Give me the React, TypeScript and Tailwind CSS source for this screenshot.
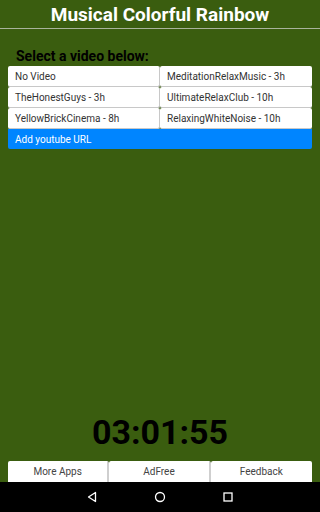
import React from "react";

const cells = [
  "No Video",
  "MeditationRelaxMusic - 3h",
  "TheHonestGuys - 3h",
  "UltimateRelaxClub - 10h",
  "YellowBrickCinema - 8h",
  "RelaxingWhiteNoise - 10h",
];

export default function App() {
  return (
    <div
      className="w-[320px] h-[512px] flex flex-col bg-[#3a5d0f] overflow-hidden"
      style={{ fontFamily: "Roboto, 'Liberation Sans', sans-serif" }}
    >
      <div className="h-[29px] shrink-0 border-b border-[#a9b39c] flex items-center justify-center">
        <span className="text-white font-bold text-[19px] leading-none">Musical Colorful Rainbow</span>
      </div>
      <div className="px-2 pt-[17px]">
        <div className="pl-2 text-black font-bold text-[14px] leading-[20px]">Select a video below:</div>
        <div className="grid grid-cols-2">
          {cells.map((c, i) => (
            <div
              key={i}
              className={`h-[21px] bg-white flex items-center pl-[7px] text-[10px] text-[#333] border-b border-[#c8c8c8] rounded-[2px] ${i % 2 === 0 ? "border-r" : ""}`}
            >
              {c}
            </div>
          ))}
        </div>
        <div className="h-[20px] bg-[#0085ff] flex items-center pl-[7px] text-[10px] text-white rounded-b-[2px]">
          Add youtube URL
        </div>
      </div>
      <div className="flex-1" />
      <div className="flex justify-center text-black font-bold text-[34px] leading-none pb-[12px]">03:01:55</div>
      <div className="px-2 grid grid-cols-3 h-[21px]">
        <div className="bg-white flex items-center justify-center text-[10px] text-[#444] border-r-2 border-[#cfcfcf] rounded-t-[2px]">More Apps</div>
        <div className="bg-white flex items-center justify-center text-[10px] text-[#444] border-r-2 border-[#cfcfcf] rounded-t-[2px]">AdFree</div>
        <div className="bg-white flex items-center justify-center text-[10px] text-[#444] rounded-t-[2px]">Feedback</div>
      </div>
      <div className="h-[30px] shrink-0 bg-black flex items-center justify-center gap-[56px]">
        <svg width="12" height="12" viewBox="0 0 12 12">
          <path d="M9.5 1.5 L2.5 6 L9.5 10.5 Z" fill="none" stroke="#fff" strokeWidth="1.3" strokeLinejoin="round" />
        </svg>
        <svg width="12" height="12" viewBox="0 0 12 12">
          <circle cx="6" cy="6" r="4.5" fill="none" stroke="#fff" strokeWidth="1.3" />
        </svg>
        <svg width="12" height="12" viewBox="0 0 12 12">
          <rect x="2" y="2" width="8" height="8" fill="none" stroke="#fff" strokeWidth="1.3" />
        </svg>
      </div>
    </div>
  );
}
